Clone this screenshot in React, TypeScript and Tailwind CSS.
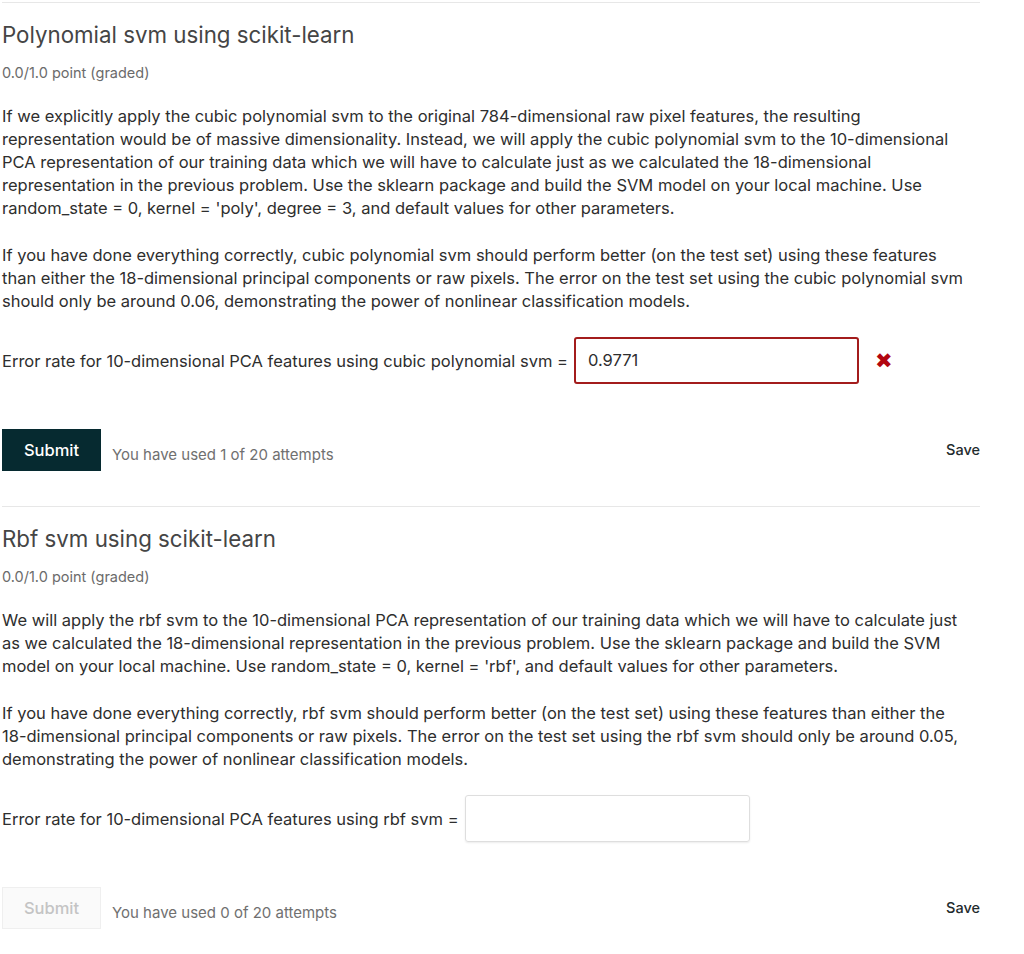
import React from "react";

function Problem(props: {
  title: string;
  paras: string[];
  label: string;
  value: string;
  wrong: boolean;
  attempts: string;
}) {
  const { title, paras, label, value, wrong, attempts } = props;
  return (
    <section className="border-t border-[#e7e7e7] pt-[18px]">
      <h2 className="text-[22.3px] leading-[28px] text-[#454545] font-normal">{title}</h2>
      <div className="mt-[14px] text-[14.5px] leading-[20px] text-[#6b6b6b]">0.0/1.0 point (graded)</div>
      <div className="mt-[22px] w-[970px] text-[16.5px] leading-[23px] text-[#2e2e2e]">
        {paras.map((p, i) => (
          <p key={i} className={i > 0 ? "mt-[24px]" : ""}>
            {p}
          </p>
        ))}
      </div>
      <div className="mt-[24px] flex items-center">
        <span className="mt-[2px] text-[16.5px] leading-[23px] text-[#2e2e2e]">{label}</span>
        {wrong ? (
          <div className="ml-[6px] flex h-[47px] w-[285px] items-center rounded-[3px] border-2 border-[#a31c1c] px-[12px] text-[16.5px] text-[#2e2e2e]">
            {value}
          </div>
        ) : (
          <div className="ml-[6px] h-[47px] w-[285px] rounded-[3px] border border-[#dedede] shadow-[0_1px_2px_rgba(0,0,0,0.08)]"></div>
        )}
        {wrong && <span className="ml-[16px] text-[21px] leading-none text-[#b20610]">✖</span>}
      </div>
      <div className="mt-[45px] flex items-center">
        {wrong ? (
          <div className="flex h-[42px] w-[99px] items-center justify-center bg-[#062a30] text-[16.5px] font-medium text-white">
            Submit
          </div>
        ) : (
          <div className="flex h-[42px] w-[99px] items-center justify-center border border-[#efefef] bg-[#fafafa] text-[16.5px] font-medium text-[#c4c4c4]">
            Submit
          </div>
        )}
        <span className="ml-[11px] mt-[10px] text-[15px] text-[#707070]">{attempts}</span>
        <span className="ml-auto text-[14.5px] font-medium text-[#1f2b2e]">Save</span>
      </div>
    </section>
  );
}

export default function App() {
  return (
    <div
      className="bg-white pl-[2px] pt-[2px]"
      style={{ fontFamily: "Inter, 'Noto Sans', sans-serif" }}
    >
      <div className="w-[978px]">
        <Problem
          title="Polynomial svm using scikit-learn"
          paras={[
            "If we explicitly apply the cubic polynomial svm to the original 784-dimensional raw pixel features, the resulting representation would be of massive dimensionality. Instead, we will apply the cubic polynomial svm to the 10-dimensional PCA representation of our training data which we will have to calculate just as we calculated the 18-dimensional representation in the previous problem. Use the sklearn package and build the SVM model on your local machine. Use random_state = 0, kernel = 'poly', degree = 3, and default values for other parameters.",
            "If you have done everything correctly, cubic polynomial svm should perform better (on the test set) using these features than either the 18-dimensional principal components or raw pixels. The error on the test set using the cubic polynomial svm should only be around 0.06, demonstrating the power of nonlinear classification models.",
          ]}
          label="Error rate for 10-dimensional PCA features using cubic polynomial svm ="
          value="0.9771"
          wrong={true}
          attempts="You have used 1 of 20 attempts"
        />
        <div className="h-[35px]"></div>
        <Problem
          title="Rbf svm using scikit-learn"
          paras={[
            "We will apply the rbf svm to the 10-dimensional PCA representation of our training data which we will have to calculate just as we calculated the 18-dimensional representation in the previous problem. Use the sklearn package and build the SVM model on your local machine. Use random_state = 0, kernel = 'rbf', and default values for other parameters.",
            "If you have done everything correctly, rbf svm should perform better (on the test set) using these features than either the 18-dimensional principal components or raw pixels. The error on the test set using the rbf svm should only be around 0.05, demonstrating the power of nonlinear classification models.",
          ]}
          label="Error rate for 10-dimensional PCA features using rbf svm ="
          value=""
          wrong={false}
          attempts="You have used 0 of 20 attempts"
        />
      </div>
    </div>
  );
}
